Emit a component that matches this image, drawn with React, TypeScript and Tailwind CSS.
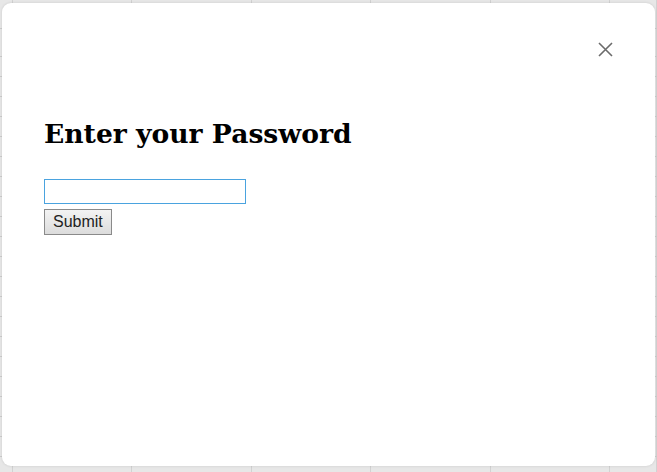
import React from 'react';

const rowHeights = [29, 28, ...Array.from({ length: 21 }, () => 20)];
const cols = [13, 119, 120, 119, 120, 119, 47];

const Backdrop: React.FC = () => (
    <div className="flex flex-col">
        {rowHeights.map((h, i) => (
            <div key={i} className="flex border-b border-[#cdcdcd]" style={{ height: h }}>
                {cols.map((w, j) => (
                    <div key={j} className="border-r border-[#d2d2d2] shrink-0" style={{ width: w }} />
                ))}
            </div>
        ))}
    </div>
);

const App: React.FC = () => {
    const [value, setValue] = React.useState('');

    return (
        <div className="relative w-[657px] h-[472px] overflow-hidden bg-[#e7e7e7]">
            <Backdrop />

            {/* Modal */}
            <div className="absolute left-[2px] top-[3px] w-[653px] h-[463px] bg-white rounded-[9px] shadow-[0_0_3px_rgba(0,0,0,0.12)]">
                <button
                    aria-label="Close"
                    className="absolute right-[41px] top-[38px] w-[17px] h-[17px] flex items-center justify-center text-[#6b6b6b]"
                >
                    <svg width="15" height="15" viewBox="0 0 15 15" fill="none" stroke="currentColor" strokeWidth="1.6">
                        <path d="M1 1L14 14M14 1L1 14" />
                    </svg>
                </button>

                <div className="pl-[42px] pt-[111px]">
                    <h2 className="text-[26.6px] leading-[40px] font-bold text-black" style={{ fontFamily: "Georgia, 'DejaVu Serif', serif" }}>
                        Enter your Password
                    </h2>

                    <form className="mt-[25px] flex flex-col items-start" onSubmit={(e) => e.preventDefault()}>
                        <input
                            type="password"
                            value={value}
                            onChange={(e) => setValue(e.target.value)}
                            className="w-[202px] h-[25px] border border-[#4aa3df] outline-none px-1 bg-white"
                        />
                        <button
                            type="submit"
                            className="mt-[5px] h-[26px] px-[8px] border border-[#8a8a8a] bg-gradient-to-b from-[#f3f3f3] to-[#dcdcdc] text-[16px] text-[#222] leading-none"
                            style={{ fontFamily: "'Liberation Sans', Arial, sans-serif" }}
                        >
                            Submit
                        </button>
                    </form>
                </div>
            </div>
        </div>
    );
};

export default App;
